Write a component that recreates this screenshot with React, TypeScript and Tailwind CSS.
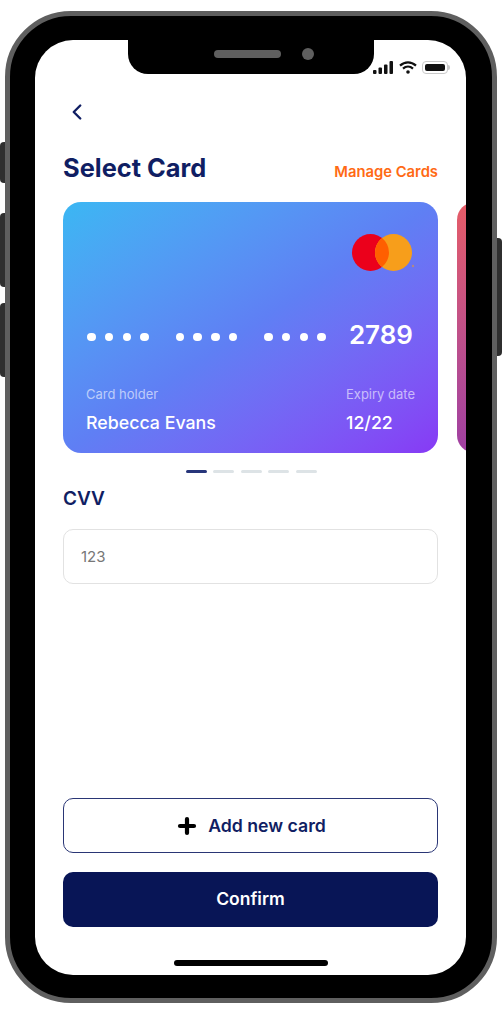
import { ChevronLeft, Plus } from "lucide-react";

const font = { fontFamily: "Inter, sans-serif" };

function Dots() {
  return (
    <div className="flex gap-[9.1px]">
      {[0, 1, 2, 3].map((i) => (
        <span key={i} className="w-[8.5px] h-[8.5px] rounded-full bg-white" />
      ))}
    </div>
  );
}

function StatusIcons() {
  return (
    <div className="flex items-center gap-[6px]">
      <svg width="20" height="13" viewBox="0 0 20 13" fill="#111">
        <rect x="0" y="9" width="3.5" height="4" rx="1" />
        <rect x="5.5" y="6.5" width="3.5" height="6.5" rx="1" />
        <rect x="11" y="3.5" width="3.5" height="9.5" rx="1" />
        <rect x="16.5" y="0" width="3.5" height="13" rx="1" />
      </svg>
      <svg width="18" height="13" viewBox="0 0 18 13" fill="none" stroke="#111" strokeWidth="2.2">
        <path d="M1 4.6C5.8 0.2 12.2 0.2 17 4.6" />
        <path d="M4 7.6C7 5 11 5 14 7.6" />
        <circle cx="9" cy="11" r="1.8" fill="#111" stroke="none" />
      </svg>
      <div className="flex items-center -ml-[1px]">
        <div className="w-[26px] h-[13px] rounded-[4px] border border-[#c9c9c9] p-[2px]">
          <div className="w-full h-full rounded-[2px] bg-[#111]" />
        </div>
        <div className="w-[2px] h-[5px] rounded-r bg-[#c9c9c9]" />
      </div>
    </div>
  );
}

export default function App() {
  return (
    <div className="relative w-[502px] h-[1015px] bg-white overflow-hidden" style={font}>
      {/* Side buttons */}
      <div className="absolute left-0 top-[142px] w-[6px] h-[41px] rounded-l-[4px] bg-[#2f2f2f]" />
      <div className="absolute left-0 top-[213px] w-[6px] h-[74px] rounded-l-[4px] bg-[#2f2f2f]" />
      <div className="absolute left-0 top-[303px] w-[6px] h-[74px] rounded-l-[4px] bg-[#2f2f2f]" />
      <div className="absolute right-0 top-[238px] w-[6px] h-[118px] rounded-r-[4px] bg-[#2f2f2f]" />

      {/* Phone frame */}
      <div className="relative ml-[5px] mt-[11px] w-[492px] h-[992px] rounded-[66px] bg-black border-[5px] border-[#5f5f5f] p-[25px] pt-[24px]">
        <div className="relative h-[935px] w-[431px] rounded-[38px] bg-white overflow-hidden flex flex-col">
          {/* Notch */}
          <div className="absolute left-[93px] top-0 w-[246px] h-[34px] rounded-b-[20px] bg-black flex items-center gap-[21px] pl-[86px] pb-[7px]">
            <div className="w-[67px] h-[8px] rounded-full bg-[#5f5f5f]" />
            <div className="w-[12px] h-[12px] rounded-full bg-[#5f5f5f]" />
          </div>
          <div className="flex justify-end h-[34px] pt-[20px] pr-[16px]">
            <StatusIcons />
          </div>

          <div className="pl-[28px] flex flex-col flex-1">
            <ChevronLeft size={26} strokeWidth={2.2} className="text-[#101e63] mt-[25px] ml-[1px]" />
            <div className="flex items-center justify-between pr-[28px] mt-[25px]">
              <h1 className="text-[25.4px] leading-[36px] font-bold text-[#101e63]">Select Card</h1>
              <span className="text-[14.8px] font-semibold text-[#ff6a14] mt-[8px]">Manage Cards</span>
            </div>

            {/* Cards */}
            <div className="flex gap-[19px] mt-[16px] overflow-hidden">
              <div className="w-[375px] h-[251px] shrink-0 rounded-[18px] bg-gradient-to-br from-[#3ab7f3] via-[#5f7ff4] to-[#8739f5] px-[23px] flex flex-col text-white">
                <div className="flex justify-end mt-[32px]">
                  <svg width="64" height="38" viewBox="0 0 64 38">
                    <circle cx="19.5" cy="18.5" r="18.5" fill="#eb001b" />
                    <circle cx="42.5" cy="18.5" r="18.5" fill="#f79e1b" />
                    <path d="M31 4.01a18.5 18.5 0 0 1 0 28.98a18.5 18.5 0 0 1 0-28.98z" fill="#ff5f00" />
                    <circle cx="62" cy="32" r="1.2" fill="#f79e1b" opacity="0.5" />
                  </svg>
                </div>
                <div className="flex items-center justify-between mt-[45px]">
                  <div className="flex gap-[27.2px] mt-[4px] ml-[1.4px]">
                    <Dots />
                    <Dots />
                    <Dots />
                  </div>
                  <span className="text-[26px] leading-[36px] font-semibold mr-[2px]">2789</span>
                </div>
                <div className="flex justify-between mt-[32px]">
                  <div>
                    <div className="text-[13px] leading-[18px] text-white/60">Card holder</div>
                    <div className="text-[17.8px] leading-[26px] font-medium mt-[7px]">Rebecca Evans</div>
                  </div>
                  <div className="w-[69px]">
                    <div className="text-[13px] leading-[18px] text-white/60 whitespace-nowrap">Expiry date</div>
                    <div className="text-[17.8px] leading-[26px] font-medium mt-[7px]">12/22</div>
                  </div>
                </div>
              </div>
              <div className="w-[40px] h-[251px] shrink-0 rounded-l-[18px] bg-gradient-to-b from-[#e65c66] to-[#9f3fa2]" />
            </div>

            {/* Pager */}
            <div className="flex justify-center gap-[6.5px] mt-[17px] pr-[27px]">
              <span className="w-[21px] h-[3px] rounded-full bg-[#27357a]" />
              <span className="w-[21px] h-[3px] rounded-full bg-[#dde3e6]" />
              <span className="w-[21px] h-[3px] rounded-full bg-[#dde3e6]" />
              <span className="w-[21px] h-[3px] rounded-full bg-[#dde3e6]" />
              <span className="w-[21px] h-[3px] rounded-full bg-[#dde3e6]" />
            </div>

            <div className="pr-[28px]">
              <h2 className="text-[19px] leading-[28px] font-semibold text-[#101e63] mt-[12px]">CVV</h2>
              <div className="mt-[16px] h-[55px] rounded-[10px] border border-[#e2e2e2] flex items-center px-[17px] text-[15px] text-[#777]">
                <span className="mt-[1px]">123</span>
              </div>
            </div>

            <div className="flex-1" />

            <div className="pr-[28px] pb-[48px] flex flex-col gap-[19px]">
              <button className="h-[55px] rounded-[10px] border border-[#2a3675] flex items-center justify-center gap-[9px] text-[17.7px] font-semibold text-[#101e63]">
                <Plus size={24} strokeWidth={4.2} className="text-black" />
                <span className="mt-[1px]">Add new card</span>
              </button>
              <button className="h-[55px] rounded-[10px] bg-[#081556] text-white text-[17.5px] font-semibold">Confirm</button>
            </div>
          </div>

          {/* Home indicator */}
          <div className="absolute left-[139px] bottom-[9px] w-[154px] h-[6px] rounded-full bg-black" />
        </div>
      </div>
    </div>
  );
}
